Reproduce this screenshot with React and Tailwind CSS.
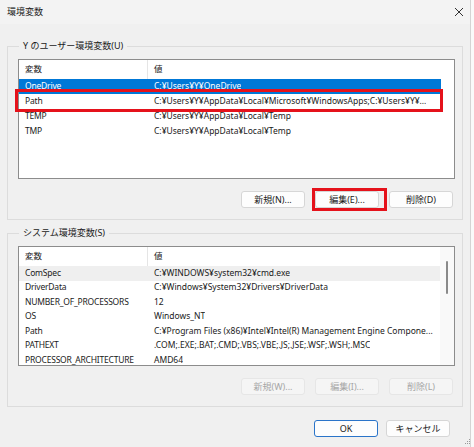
import React from 'react';

const userVars = [
  { name: 'OneDrive', value: 'C:¥Users¥Y¥OneDrive', selected: true },
  { name: 'Path', value: 'C:¥Users¥Y¥AppData¥Local¥Microsoft¥WindowsApps;C:¥Users¥Y¥...' },
  { name: 'TEMP', value: 'C:¥Users¥Y¥AppData¥Local¥Temp' },
  { name: 'TMP', value: 'C:¥Users¥Y¥AppData¥Local¥Temp' },
];

const systemVars = [
  { name: 'ComSpec', value: 'C:¥WINDOWS¥system32¥cmd.exe', hover: true },
  { name: 'DriverData', value: 'C:¥Windows¥System32¥Drivers¥DriverData' },
  { name: 'NUMBER_OF_PROCESSORS', value: '12' },
  { name: 'OS', value: 'Windows_NT' },
  { name: 'Path', value: 'C:¥Program Files (x86)¥Intel¥Intel(R) Management Engine Compone...' },
  { name: 'PATHEXT', value: '.COM;.EXE;.BAT;.CMD;.VBS;.VBE;.JS;.JSE;.WSF;.WSH;.MSC' },
  { name: 'PROCESSOR_ARCHITECTURE', value: 'AMD64' },
];

const Btn = ({ children, disabled, primary }) => (
  <button
    className={
      'h-[17px] w-[64px] rounded-[3px] border text-[9px] leading-none ' +
      (disabled
        ? 'border-[#e6e6e6] bg-[#f5f5f5] text-[#a6a6a6]'
        : primary
        ? 'border-[#2a74c9] bg-[#fdfdfd] text-[#1a1a1a]'
        : 'border-[#d6d6d6] bg-[#fdfdfd] text-[#1a1a1a]')
    }
  >
    {children}
  </button>
);

const VarList = ({ rows, rowH, scroll }) => (
  <div className="relative h-[120px] w-[437px] overflow-hidden border border-[#8c8c8c] bg-white">
    <div className="flex h-[19px] items-center text-[8.5px] text-[#1a1a1a]">
      <div className="flex h-full w-[129px] items-center border-r border-[#e5e5e5] pl-[6px]">変数</div>
      <div className="pl-[6px]">値</div>
    </div>
    {rows.map((r) => (
      <div
        key={r.name}
        className={
          'flex w-[422px] items-center whitespace-nowrap text-[8.5px] ' +
          rowH +
          (r.selected ? ' bg-[#0078d7] text-white' : r.hover ? ' bg-[#efefef] text-[#1a1a1a]' : ' text-[#1a1a1a]')
        }
      >
        <div className="w-[130px] shrink-0 pl-[6px] tracking-[-0.2px]">{r.name}</div>
        <div className="overflow-hidden pl-[5px]">{r.value}</div>
      </div>
    ))}
    {scroll && (
      <div className="absolute right-0 top-0 h-full w-[14px] bg-[#f9f9f9]">
        <div className="ml-[6px] mt-[14px] h-[33px] w-[2px] rounded-full bg-[#8a8a8a]" />
      </div>
    )}
  </div>
);

const Group = ({ label, children }) => (
  <fieldset className="w-[456px] border border-[#dcdcdc] pl-[10px] pr-[7px]">
    <legend className="ml-[1px] px-[4px] text-[9px] leading-[12px] text-[#1a1a1a]">{label}</legend>
    {children}
  </fieldset>
);

export default function App() {
  return (
    <div
      className="relative flex h-[447px] w-[474px] overflow-hidden bg-[#fafafa]"
      style={{ fontFamily: '"Noto Sans", "Noto Sans CJK JP", sans-serif' }}
    >
      <div className="flex h-full w-[471px] flex-col border-r border-[#d4d4d4] bg-[#f0f0f0]">
        <div className="flex h-[24px] items-center justify-between bg-[#f3f3f3] pl-[7px] pr-[5px]">
          <span className="text-[9px] text-[#1a1a1a]">環境変数</span>
          <svg width="10" height="10" viewBox="0 0 10 10" className="mr-[1px]">
            <path d="M1 1 L9 9 M9 1 L1 9" stroke="#333" strokeWidth="1" />
          </svg>
        </div>

        <div className="flex flex-col px-[7px]">
          <div className="mt-[16px]">
            <Group label="Y のユーザー環境変数(U)">
              <div className="mt-[7px]">
                <VarList rows={userVars} rowH="h-[15px]" />
              </div>
              <div className="mb-[11px] mt-[12px] flex w-[437px] justify-end gap-[10px] pr-[2px]">
                <Btn>新規(N)...</Btn>
                <Btn>編集(E)...</Btn>
                <Btn>削除(D)</Btn>
              </div>
            </Group>
          </div>

          <div className="mt-[7px]">
            <Group label="システム環境変数(S)">
              <div className="mt-[7px]">
                <VarList rows={systemVars} rowH="h-[14.5px]" scroll />
              </div>
              <div className="mb-[11px] mt-[12px] flex w-[437px] justify-end gap-[10px] pr-[2px]">
                <Btn disabled>新規(W)...</Btn>
                <Btn disabled>編集(I)...</Btn>
                <Btn disabled>削除(L)</Btn>
              </div>
            </Group>
          </div>

          <div className="mt-[13px] flex w-[443px] justify-end gap-[8px]">
            <Btn primary>OK</Btn>
            <Btn>キャンセル</Btn>
          </div>
        </div>
      </div>

      <svg width="6" height="6" viewBox="0 0 6 6" className="absolute bottom-[2px] right-[3px]">
        <rect x="4" y="0" width="1" height="1" fill="#999" />
        <rect x="2" y="2" width="1" height="1" fill="#999" />
        <rect x="4" y="2" width="1" height="1" fill="#999" />
        <rect x="0" y="4" width="1" height="1" fill="#999" />
        <rect x="2" y="4" width="1" height="1" fill="#999" />
        <rect x="4" y="4" width="1" height="1" fill="#999" />
      </svg>

      <div className="pointer-events-none absolute left-[15px] top-[89px] h-[23px] w-[428px] border-[3px] border-[#e5121b]" />
      <div className="pointer-events-none absolute left-[312px] top-[188px] h-[23px] w-[75px] border-[3px] border-[#e5121b]" />
    </div>
  );
}
